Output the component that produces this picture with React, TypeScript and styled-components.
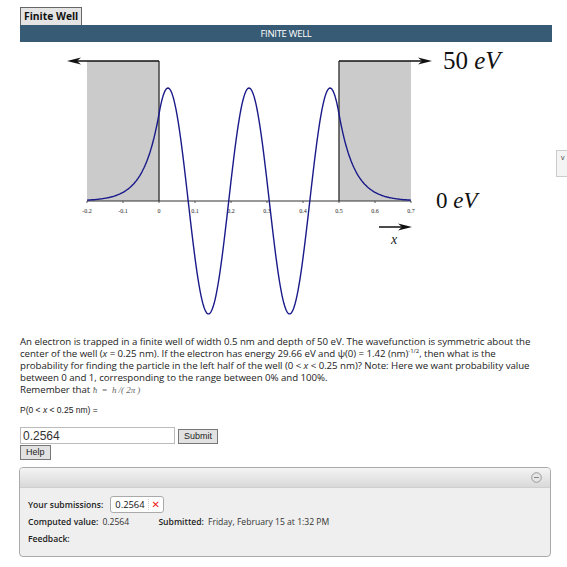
import React from "react";
import styled, { createGlobalStyle } from "styled-components";

const GlobalStyle = createGlobalStyle`
  html, body {
    margin: 0;
    padding: 0;
    background: #fff;
  }
  body {
    font-family: "Open Sans", "Liberation Sans", sans-serif;
    color: #222;
  }
`;

const Page = styled.div`
  position: relative;
  width: 532px;
  padding: 3px 15px 12px 20px;
`;

const Tab = styled.div`
  display: inline-block;
  height: 17px;
  line-height: 17px;
  padding: 0 3px;
  background: #e4e4e4;
  border: 1px solid #666;
  border-bottom: none;
  font-family: "Open Sans", sans-serif;
  font-weight: 700;
  font-size: 10.3px;
  color: #111;
`;

const TitleBar = styled.div`
  height: 17px;
  line-height: 17px;
  background: #375b74;
  color: #fff;
  text-align: center;
  font-family: "Open Sans", sans-serif;
  font-size: 9.5px;
  letter-spacing: -0.3px;
`;

const Figure = styled.svg`
  display: block;
  width: 532px;
  height: 292px;
`;

const Problem = styled.p`
  margin: 2px 0 0;
  font-family: "Open Sans", sans-serif;
  font-size: 9.7px;
  line-height: 12px;
  color: #222;
  letter-spacing: -0.05px;
  white-space: nowrap;
`;

const Sup = styled.sup`
  font-size: 6px;
  line-height: 0;
`;

const MathImg = styled.span`
  font-family: "Liberation Serif", serif;
  font-style: italic;
  color: #666;
  font-size: 9px;
`;

const Prompt = styled.div`
  margin-top: 9px;
  font-family: "Liberation Sans", sans-serif;
  font-size: 8.5px;
  color: #222;
`;

const ButtonRow = styled.div<{ $top?: number }>`
  display: flex;
  align-items: flex-end;
  gap: 3px;
  margin-top: ${(p) => p.$top ?? 0}px;
`;

const AnswerInput = styled.input`
  box-sizing: border-box;
  width: 155px;
  height: 17px;
  padding: 0 2px;
  border: 1px solid #bbb;
  font-family: "Liberation Sans", sans-serif;
  font-size: 12px;
  color: #333;
  outline: none;
`;

const Button = styled.button`
  box-sizing: border-box;
  height: 15px;
  padding: 0 5px;
  margin: 0;
  background: #e2e2e2;
  border: 1px solid #777;
  font-family: "Liberation Sans", sans-serif;
  font-size: 9px;
  color: #222;
  line-height: 1;
`;

const Panel = styled.div`
  margin-top: 7px;
  width: 530px;
  margin-left: -1px;
  border: 1px solid #aaa;
  border-radius: 4px;
  background: #efefef;
  overflow: hidden;
`;

const PanelHeader = styled.div`
  display: flex;
  justify-content: flex-end;
  align-items: center;
  height: 19px;
  padding-right: 8px;
  background: linear-gradient(#f4f4f4, #d9d9d9);
  border-bottom: 1px solid #cfcfcf;
`;

const PanelBody = styled.div`
  display: flex;
  flex-direction: column;
  padding: 8px 8px 9px;
  font-family: "Open Sans", sans-serif;
  font-size: 8.6px;
  color: #222;
`;

const InfoRow = styled.div`
  display: flex;
  align-items: center;
  height: 17px;
`;

const Label = styled.span`
  font-weight: 600;
  margin-right: 4px;
`;

const Value = styled.span<{ $w?: number }>`
  color: #333;
  width: ${(p) => (p.$w ? `${p.$w}px` : "auto")};
`;

const SubmissionChip = styled.span`
  display: inline-flex;
  align-items: center;
  height: 15px;
  padding: 0 3px 0 4px;
  margin-left: 3px;
  background: #fff;
  border: 1px solid #aaa;
  border-radius: 3px;
  font-size: 9.4px;
  color: #111;
`;

const ChipRemove = styled.span`
  margin-left: 3px;
  padding-left: 3px;
  border-left: 1px dotted #ccc;
  color: #e22;
  font-weight: 700;
  font-size: 10px;
  font-family: "DejaVu Sans", sans-serif;
`;

const SideTab = styled.div`
  position: absolute;
  left: 556px;
  top: 150px;
  width: 14px;
  height: 27px;
  box-sizing: border-box;
  border: 1px solid #ccc;
  border-right: none;
  background: #f4f4f4;
  font-size: 7px;
  line-height: 14px;
  padding-left: 4px;
  color: #333;
`;

// plot geometry, page coords minus origin (20, 37)
const OX = 20;
const OY = 37;
const X0 = 159 - OX;
const PX_PER_NM = 360;
const AXIS_Y = 196 - OY;
const TOP_Y = 56 - OY;
const AMP = 113;
const K = 27.9;
const KAPPA = 23.1;

const px = (x: number) => X0 + x * PX_PER_NM;

const psi = (x: number) => {
  const edge = Math.cos(K * 0.25);
  if (x < 0) return edge * Math.exp(KAPPA * x);
  if (x > 0.5) return edge * Math.exp(-KAPPA * (x - 0.5));
  return Math.cos(K * (x - 0.25));
};

const wavePath = () => {
  const pts: string[] = [];
  for (let i = 0; i <= 324; i++) {
    const x = -0.2 + i / PX_PER_NM;
    const y = AXIS_Y - AMP * psi(x);
    pts.push(`${i === 0 ? "M" : "L"}${px(x).toFixed(1)},${y.toFixed(1)}`);
  }
  return pts.join(" ");
};

const ticks = [-0.2, -0.1, 0, 0.1, 0.2, 0.3, 0.4, 0.5, 0.6, 0.7];

const Arrow = ({ x1, x2, y }: { x1: number; x2: number; y: number }) => {
  const dir = x2 > x1 ? 1 : -1;
  const tip = x2;
  return (
    <g>
      <line x1={x1} y1={y} x2={tip - dir * 6} y2={y} stroke="#111" strokeWidth={1.5} />
      <path
        d={`M${tip},${y} L${tip - dir * 14},${y - 3.5} L${tip - dir * 10},${y} L${tip - dir * 14},${y + 3.5} Z`}
        fill="#111"
      />
    </g>
  );
};

const WellPlot = () => (
  <Figure viewBox="0 0 532 292">
    <rect x={px(-0.2)} y={TOP_Y} width={72} height={AXIS_Y - TOP_Y} fill="#cbcbcb" />
    <rect x={px(0.5)} y={TOP_Y} width={72} height={AXIS_Y - TOP_Y} fill="#cbcbcb" />
    <line x1={px(0)} y1={TOP_Y} x2={px(0)} y2={AXIS_Y} stroke="#444" strokeWidth={1.5} />
    <line x1={px(0.5)} y1={TOP_Y} x2={px(0.5)} y2={AXIS_Y} stroke="#444" strokeWidth={1.5} />
    <Arrow x1={px(0)} x2={67 - OX} y={TOP_Y} />
    <Arrow x1={px(0.5)} x2={432 - OX} y={TOP_Y} />
    <line x1={px(-0.2)} y1={AXIS_Y} x2={px(0.7)} y2={AXIS_Y} stroke="#333" strokeWidth={1} />
    {ticks.map((t) => (
      <g key={t}>
        <line x1={px(t)} y1={AXIS_Y} x2={px(t)} y2={AXIS_Y + 2} stroke="#333" strokeWidth={0.8} />
        <text
          x={px(t)}
          y={AXIS_Y + 12}
          fontFamily="Liberation Serif, serif"
          fontSize={6}
          textAnchor="middle"
          fill="#222"
        >
          {t === 0 ? "0" : t.toFixed(1)}
        </text>
      </g>
    ))}
    <path d={wavePath()} fill="none" stroke="#1a1a8a" strokeWidth={1.4} strokeLinejoin="round" />
    <Arrow x1={379 - OX} x2={412 - OX} y={222 - OY} />
    <text x={394 - OX} y={239 - OY} fontFamily="Liberation Serif, serif" fontStyle="italic" fontSize={14} textAnchor="middle" fill="#222">
      x
    </text>
    <text x={443 - OX} y={64 - OY} fontFamily="Liberation Serif, serif" fontSize={25} fill="#111">
      50 <tspan fontStyle="italic">eV</tspan>
    </text>
    <text x={436 - OX} y={203 - OY} fontFamily="Liberation Serif, serif" fontSize={23} fill="#111">
      0 <tspan fontStyle="italic">eV</tspan>
    </text>
  </Figure>
);

const CollapseIcon = () => (
  <svg width="11" height="11" viewBox="0 0 11 11">
    <circle cx="5.5" cy="5.5" r="4.8" fill="#e6e6e6" stroke="#999" strokeWidth="1" />
    <line x1="3" y1="5.5" x2="8" y2="5.5" stroke="#888" strokeWidth="1.2" />
  </svg>
);

export default function App() {
  return (
    <>
      <GlobalStyle />
      <Page>
        <Tab>Finite Well</Tab>
        <TitleBar>FINITE WELL</TitleBar>
        <WellPlot />
        <Problem>
          An electron is trapped in a finite well of width 0.5 nm and depth of 50 eV. The wavefunction is symmetric about the
          <br />
          center of the well (<i>x</i> = 0.25 nm). If the electron has energy 29.66 eV and ψ(0) = 1.42 (nm)<Sup>-1/2</Sup>, then
          what is the
          <br />
          probability for finding the particle in the left half of the well (0 &lt; <i>x</i> &lt; 0.25 nm)? Note: Here we want
          probability value
          <br />
          between 0 and 1, corresponding to the range between 0% and 100%.
          <br />
          Remember that <MathImg>ħ &nbsp;= &nbsp;h /( 2π )</MathImg>
        </Problem>
        <Prompt>
          P(0 &lt; <i>x</i> &lt; 0.25 nm) =
        </Prompt>
        <ButtonRow $top={12}>
          <AnswerInput defaultValue="0.2564" readOnly />
          <Button>Submit</Button>
        </ButtonRow>
        <ButtonRow $top={1}>
          <Button>Help</Button>
        </ButtonRow>
        <Panel>
          <PanelHeader>
            <CollapseIcon />
          </PanelHeader>
          <PanelBody>
            <InfoRow>
              <Label>Your submissions:</Label>
              <SubmissionChip>
                0.2564<ChipRemove>✕</ChipRemove>
              </SubmissionChip>
            </InfoRow>
            <InfoRow>
              <Label>Computed value:</Label>
              <Value $w={56}>0.2564</Value>
              <Label>Submitted:</Label>
              <Value>Friday, February 15 at 1:32 PM</Value>
            </InfoRow>
            <InfoRow>
              <Label>Feedback:</Label>
            </InfoRow>
          </PanelBody>
        </Panel>
        <SideTab>v</SideTab>
      </Page>
    </>
  );
}
